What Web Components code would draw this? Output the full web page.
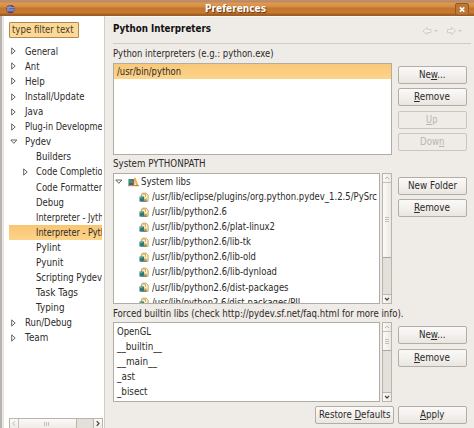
<!DOCTYPE html>
<html lang="en">
<head>
<meta charset="utf-8">
<title>Preferences</title>
<style>
html,body{margin:0;width:474px;height:428px;overflow:hidden;background:#efebe7}
body{font-family:"DejaVu Sans","DejaVu Sans Condensed",sans-serif;font-size:10px;color:#2b2a28}
</style>
</head>
<body>
<prefs-window></prefs-window>
<script>
const define = (name, html, ready) => {
  const t = document.createElement('template');
  t.innerHTML = html;
  customElements.define(name, class extends HTMLElement {
    connectedCallback() {
      if (this.shadowRoot) return;
      this.attachShadow({mode: 'open'}).append(t.content.cloneNode(true));
      if (ready) ready(this, this.shadowRoot);
    }
  });
};

/* Text run squeezed or stretched to the width given in "w" */
define('fit-text', `<style>
:host{display:inline-block;white-space:nowrap;line-height:15px;text-align:left}
span{display:inline-block;transform-origin:0 50%;white-space:nowrap}
</style><span><slot></slot></span>`, (el, root) => {
  const s = root.querySelector('span');
  const w = +el.getAttribute('w');
  const n = s.getBoundingClientRect().width;
  if (w && n) { s.style.transform = `scaleX(${w / n})`; el.style.width = w + 'px'; }
});

define('title-bar', `<style>
:host{display:flex;height:16px;box-sizing:border-box;align-items:center;justify-content:space-between;padding:2px 5px 0 6px;
background:linear-gradient(#bd9170 0,#bd8862 2px,#e09a50 3px,#d58b3e 7px,#c2752d 8px,#c67b32 13px,#a96121 14px,#9c5c26 16px);color:#fff;font-weight:bold;text-shadow:1px 1px 1px #5b3412}
svg{display:block}
::slotted(fit-text){margin-top:-2px}
</style>
<svg width="9" height="10" viewBox="0 0 9 10"><circle cx="4.5" cy="5.2" r="4.1" fill="#46437f"/><path d="M1 3.6h7M.8 5.2h7.5M1 6.8h7" stroke="#bcc8ed" stroke-width=".7"/><path d="M2 2.4Q4 .8 6 2Q3 3 2 7Q.3 5 2 2.4" fill="#9a92c4" opacity=".7"/></svg>
<slot></slot>
<svg width="14" height="13" viewBox="0 0 14 13"><rect x=".5" y=".5" width="13" height="11.6" rx="1.5" fill="#bd7835" stroke="#94582a"/><path d="M4.9 4.4l4.4 4.2M9.3 4.4l-4.4 4.2" stroke="#fff" stroke-width="1.5"/></svg>`);

define('tree-row', `<style>
:host{display:flex;height:15.08px;align-items:center;box-sizing:border-box;padding-left:1.5px;flex:none}
:host([deep]){padding-left:13.3px}
:host([sel]){background:linear-gradient(#f9c573,#fcd48b)}
i{width:14.5px;flex:none;height:8px;display:block}
svg{display:none}
:host([state=closed]) .c,:host([state=open]) .o{display:block}
</style><i><svg class="c" width="8" height="8"><path d="M1.7.9v6.2L5.2 4z" fill="#fff" stroke="#555" stroke-width=".9"/></svg><svg class="o" width="8" height="8"><path d="M.8 2h6L3.8 5.3z" fill="#fff" stroke="#555" stroke-width=".9"/></svg></i><slot></slot>`);

define('h-scroll', `<style>
:host{display:flex;box-sizing:border-box;height:12px;width:94px;border:1px solid #b9b4ac;background:#e3dfd9;flex:none}
b{display:block;box-sizing:border-box;background:linear-gradient(#fbfaf9,#ece8e3);height:11px}
.l{width:9px;border-right:1px solid #c4bfb8}.t{width:58px;border-right:1px solid #b9b4ac}.g{flex:1}.r{width:9px;border-left:1px solid #b9b4ac}
svg{display:block}
</style><b class="l"><svg width="8" height="9"><path d="M5 2.2L2.8 4.5 5 6.8" fill="none" stroke="#bbb7b1"/></svg></b><b class="t"><svg width="57" height="9"><path d="M25.5 3v4M27.5 3v4M29.5 3v4" stroke="#c3beb7"/></svg></b><span class="g"></span><b class="r"><svg width="8" height="9"><path d="M2.7 2.2L5 4.5 2.7 6.8" fill="none" stroke="#44413e" stroke-width="1.2"/></svg></b>`);

define('v-scroll', `<style>
:host{display:flex;flex-direction:column;box-sizing:border-box;width:10px;border:1px solid #b9b4ac;background:#e3dfd9;flex:none}
b{display:flex;box-sizing:border-box;background:linear-gradient(90deg,#fbfaf9,#ece8e3);align-items:center;height:9px;flex:none}
.u{border-bottom:1px solid #c4bfb8}.t{height:var(--thumb);border-bottom:1px solid #aaa59e}.g{flex:1}.d{border-top:1px solid #b9b4ac}
svg{display:block}
</style><b class="u"><svg width="8" height="8"><path d="M2 5L4 3l2 2" fill="none" stroke="#bbb7b1"/></svg></b><b class="t"><svg width="8" height="7"><path d="M2 1.5h4M2 3.5h4M2 5.5h4" stroke="#c3beb7"/></svg></b><span class="g"></span><b class="d"><svg width="8" height="8"><path d="M2 2.8L4 5l2-2.2" fill="none" stroke="#44413e" stroke-width="1.2"/></svg></b>`);

define('push-button', `<style>
:host{display:flex;box-sizing:border-box;height:18px;width:69px;border:1px solid #b2ada6;border-radius:2px;background:linear-gradient(#fbfaf9,#f3f0ed 50%,#e9e5e0);align-items:center;justify-content:center;flex:none;color:#2b2a28}
:host([disabled]){color:#b9b5ae;border-color:#cac5be;background:#efebe7}
::slotted(fit-text){margin-top:-1px}
</style><slot></slot>`);

define('list-box', `<style>
:host{display:flex;flex-direction:column;box-sizing:border-box;border:1px solid #b1aca4;background:#fff;overflow:hidden;flex:none}
</style><slot></slot>`);

define('list-row', `<style>
:host{display:flex;height:15.08px;align-items:center;padding-left:2.5px;flex:none}
:host([sel]){background:linear-gradient(#f9c878,#fcd48b);padding-bottom:.2px}
</style><slot></slot>`);

define('lib-row', `<style>
:host{display:flex;height:15.08px;align-items:center;padding-left:25px;flex:none}
svg{width:10px;height:10px;margin-right:3px;flex:none}
</style><svg viewBox="0 0 10 10"><path d="M3.4 1.2h3.8l1.9 2v6H2.3V3z" fill="#f8f1d5" stroke="#b79a55" stroke-width=".9"/><path d="M3.3 3.2Q4.8.9 6.5 2.5v2.3" fill="none" stroke="#e0a33c" stroke-width="1"/><path d="M.5 4.5h4.6v4.2H.5z" fill="#287b75"/><path d="M1 5.6h2.5" stroke="#75beb0" stroke-width=".8"/><path d="M.5 9h7.2" stroke="#285f76" stroke-width="1.1"/><path d="M5.2 6.6h2.5v2H5.2z" fill="#d49b37"/></svg><slot></slot>`);

define('nav-arrows', `<style>:host{display:block;width:42px;height:12px}svg{display:block}</style>
<svg width="42" height="12" fill="#f3f0ec" stroke="#d2cdc6" stroke-width="1"><path d="M1 6l4-3.6v2h4v3.2H5v2z"/><path d="M12 5h4.2l-2.1 2.1z" fill="#cfcac3" stroke="none"/><path d="M33.5 6l-4-3.6v2h-4v3.2h4v2z"/><path d="M36 5h4.2l-2.1 2.1z" fill="#cfcac3" stroke="none"/></svg>`);

define('pref-tree', `<style>
:host{display:flex;flex-direction:column;box-sizing:border-box;width:104.5px;height:412px;background:#fff;border-right:1px solid #d3cec8;padding:6px 1.5px 0 8.5px;flex:none;box-shadow:inset 2px 0 #b7b4b1,inset 4px 0 #e8e5e2}
.f{box-sizing:border-box;width:70px;height:16px;border:1px solid #b08a4c;border-radius:1px;background:#fcd899;padding-left:2px;color:#4e3c1d;flex:none;display:flex;align-items:center}
.rows{margin-top:5.8px;height:374.2px;overflow:hidden;flex:none}
.f fit-text{margin-top:-1px}
</style>
<div class="f"><fit-text w="61.5">type filter text</fit-text></div>
<div class="rows">
<tree-row state="closed"><fit-text w="33">General</fit-text></tree-row>
<tree-row state="closed"><fit-text w="14.5">Ant</fit-text></tree-row>
<tree-row state="closed"><fit-text w="19.8">Help</fit-text></tree-row>
<tree-row state="closed"><fit-text w="59.5">Install/Update</fit-text></tree-row>
<tree-row state="closed"><fit-text w="18.2">Java</fit-text></tree-row>
<tree-row state="closed"><fit-text w="86">Plug-in Development</fit-text></tree-row>
<tree-row state="open"><fit-text w="26">Pydev</fit-text></tree-row>
<tree-row deep><fit-text w="35">Builders</fit-text></tree-row>
<tree-row deep state="closed"><fit-text w="72">Code Completion</fit-text></tree-row>
<tree-row deep><fit-text w="66.3">Code Formatter</fit-text></tree-row>
<tree-row deep><fit-text w="28">Debug</fit-text></tree-row>
<tree-row deep><fit-text w="77.5">Interpreter - Jython</fit-text></tree-row>
<tree-row deep sel><fit-text w="80">Interpreter - Python</fit-text></tree-row>
<tree-row deep><fit-text w="24.8">Pylint</fit-text></tree-row>
<tree-row deep><fit-text w="27.3">Pyunit</fit-text></tree-row>
<tree-row deep><fit-text w="66">Scripting Pydev</fit-text></tree-row>
<tree-row deep><fit-text w="42">Task Tags</fit-text></tree-row>
<tree-row deep><fit-text w="28.5">Typing</fit-text></tree-row>
<tree-row state="closed"><fit-text w="47">Run/Debug</fit-text></tree-row>
<tree-row state="closed"><fit-text w="23.3">Team</fit-text></tree-row>
</div><h-scroll></h-scroll>`);

define('interpreter-page', `<style>
:host{display:block;flex:1;box-sizing:border-box;height:412px;padding:0 0 0 8.5px;background:#efebe7;box-shadow:inset 0 1px #fbfaf8}
header{display:flex;height:28px;box-sizing:border-box;margin-right:3px;border-bottom:1px solid #d0cbc4;padding:5px 7px 0 0;align-items:flex-start;justify-content:space-between;font-weight:bold;color:#111}
nav-arrows{margin-top:4px}
.lab{height:15px;display:flex;align-items:center}
.row{display:flex;align-items:flex-start}
.btns{display:flex;flex-direction:column;gap:4.2px;margin-left:6px}
list-box.n{width:266.5px}
v-scroll{margin-left:2.5px;width:9.5px}
footer{display:flex;gap:4.5px;padding-left:202px;margin-top:4px}
</style>
<header><fit-text w="98">Python Interpreters</fit-text><nav-arrows></nav-arrows></header>
<div class="lab" style="padding-top:2px"><fit-text w="160.5">Python interpreters (e.g.: python.exe)</fit-text></div>
<div class="row" style="margin-top:1.7px"><list-box style="width:278.5px;height:92.3px"><list-row sel><fit-text w="64">/usr/bin/python</fit-text></list-row></list-box>
<div class="btns" style="margin-top:3.6px"><push-button><fit-text w="26.5">Ne<u>w</u>...</fit-text></push-button><push-button><fit-text w="36"><u>R</u>emove</fit-text></push-button><push-button disabled><fit-text w="11.5"><u>U</u>p</fit-text></push-button><push-button disabled><fit-text w="24.5">Dow<u>n</u></fit-text></push-button></div></div>
<div class="lab" style="height:18px"><fit-text w="92.5">System PYTHONPATH</fit-text></div>
<div class="row"><list-box class="n" style="height:131.5px">
<tree-row state="open" style="padding-left:.5px"><svg width="11" height="10" viewBox="0 0 11 10" style="margin-right:2px;margin-left:-1px"><path d="M.5 2h5v6H.5z" fill="#24706c"/><path d="M1 3h3M1 5h4" stroke="#78bda7" stroke-width=".8"/><path d="M6 .8l1.5-.3 2.7 7.6-2 .8z" fill="#eeb13e"/><path d="M5 2h1.4v6H5z" fill="#be5b3d"/><path d="M0 8.7h11" stroke="#a87a36"/></svg><fit-text w="49.5">System libs</fit-text></tree-row>
<lib-row><fit-text w="225">/usr/lib/eclipse/plugins/org.python.pydev_1.2.5/PySrc</fit-text></lib-row>
<lib-row><fit-text w="75">/usr/lib/python2.6</fit-text></lib-row>
<lib-row><fit-text w="123">/usr/lib/python2.6/plat-linux2</fit-text></lib-row>
<lib-row><fit-text w="99">/usr/lib/python2.6/lib-tk</fit-text></lib-row>
<lib-row><fit-text w="104">/usr/lib/python2.6/lib-old</fit-text></lib-row>
<lib-row><fit-text w="125">/usr/lib/python2.6/lib-dynload</fit-text></lib-row>
<lib-row><fit-text w="136.5">/usr/lib/python2.6/dist-packages</fit-text></lib-row>
<lib-row><fit-text w="150.5">/usr/lib/python2.6/dist-packages/PIL</fit-text></lib-row>
</list-box><v-scroll style="height:131.5px;--thumb:75px"></v-scroll>
<div class="btns" style="margin-top:4px"><push-button><fit-text w="49">New Folder</fit-text></push-button><push-button><fit-text w="36"><u>R</u>emove</fit-text></push-button></div></div>
<div class="lab" style="height:18px"><fit-text w="290.5">Forced builtin libs (check http://pydev.sf.net/faq.html for more info).</fit-text></div>
<div class="row"><list-box class="n" style="height:80px">
<list-row><fit-text w="34">OpenGL</fit-text></list-row><list-row><fit-text w="45">__builtin__</fit-text></list-row><list-row><fit-text w="40">__main__</fit-text></list-row><list-row><fit-text w="18">_ast</fit-text></list-row><list-row><fit-text w="30.5">_bisect</fit-text></list-row>
</list-box><v-scroll style="height:80px;--thumb:19px"></v-scroll>
<div class="btns" style="margin-top:4px"><push-button><fit-text w="26.5">Ne<u>w</u>...</fit-text></push-button><push-button><fit-text w="36"><u>R</u>emove</fit-text></push-button></div></div>
<footer><push-button style="width:78.5px"><fit-text w="71.5">Restore <u>D</u>efaults</fit-text></push-button><push-button><fit-text w="24.5"><u>A</u>pply</fit-text></push-button></footer>`);

define('prefs-window', `<style>
:host{display:block;width:474px;height:428px;overflow:hidden}
main{display:flex}
</style><title-bar><fit-text w="61">Preferences</fit-text></title-bar><main><pref-tree></pref-tree><interpreter-page></interpreter-page></main>`);
</script>
</body>
</html>
